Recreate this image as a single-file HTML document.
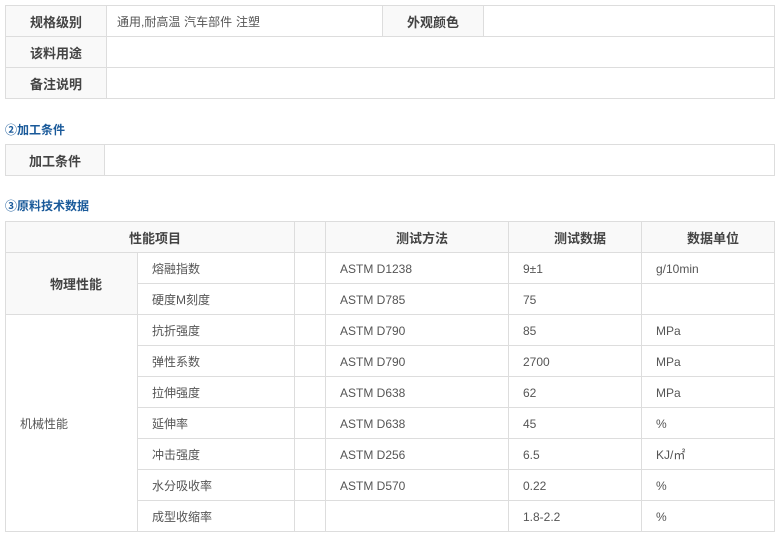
<!DOCTYPE html>
<html lang="zh">
<head>
<meta charset="utf-8">
<title>原料技术数据</title>
<style>
html,body{margin:0;padding:0;background:#fff}
body{position:relative;width:779px;height:539px;overflow:hidden;font-family:"Liberation Sans","WenQuanYi Zen Hei","Noto Sans CJK SC",sans-serif;font-size:12px;color:#555}
div{position:absolute}
.bg{background:#f9f9f9}
.h{height:1px;background:#ddd}
.v{width:1px;background:#ddd}
.t{height:20px;line-height:20px;white-space:nowrap}
.b{font-size:13px;font-weight:bold;color:#444;margin-top:1px}
.s{font-weight:bold;color:#1a5a9a}
</style>
</head>
<body>
<!-- shaded cells -->
<div class="bg" style="left:5px;top:5px;width:101px;height:93px"></div>
<div class="bg" style="left:382px;top:5px;width:101px;height:31px"></div>
<div class="bg" style="left:5px;top:144px;width:99px;height:31px"></div>
<div class="bg" style="left:5px;top:221px;width:769px;height:31px"></div>
<div class="bg" style="left:5px;top:252px;width:132px;height:62px"></div>

<!-- table 1 lines -->
<div class="h" style="left:5px;top:5px;width:770px"></div>
<div class="h" style="left:5px;top:36px;width:770px"></div>
<div class="h" style="left:5px;top:67px;width:770px"></div>
<div class="h" style="left:5px;top:98px;width:770px"></div>
<div class="v" style="left:5px;top:5px;height:94px"></div>
<div class="v" style="left:106px;top:5px;height:94px"></div>
<div class="v" style="left:382px;top:5px;height:31px"></div>
<div class="v" style="left:483px;top:5px;height:31px"></div>
<div class="v" style="left:774px;top:5px;height:94px"></div>

<!-- table 2 lines -->
<div class="h" style="left:5px;top:144px;width:770px"></div>
<div class="h" style="left:5px;top:175px;width:770px"></div>
<div class="v" style="left:5px;top:144px;height:32px"></div>
<div class="v" style="left:104px;top:144px;height:32px"></div>
<div class="v" style="left:774px;top:144px;height:32px"></div>

<!-- table 3 lines -->
<div class="h" style="left:5px;top:221px;width:770px"></div>
<div class="h" style="left:5px;top:252px;width:770px"></div>
<div class="h" style="left:137px;top:283px;width:638px"></div>
<div class="h" style="left:5px;top:314px;width:770px"></div>
<div class="h" style="left:137px;top:345px;width:638px"></div>
<div class="h" style="left:137px;top:376px;width:638px"></div>
<div class="h" style="left:137px;top:407px;width:638px"></div>
<div class="h" style="left:137px;top:438px;width:638px"></div>
<div class="h" style="left:137px;top:469px;width:638px"></div>
<div class="h" style="left:137px;top:500px;width:638px"></div>
<div class="h" style="left:5px;top:531px;width:770px"></div>
<div class="v" style="left:5px;top:221px;height:311px"></div>
<div class="v" style="left:137px;top:252px;height:280px"></div>
<div class="v" style="left:294px;top:221px;height:311px"></div>
<div class="v" style="left:325px;top:221px;height:311px"></div>
<div class="v" style="left:508px;top:221px;height:311px"></div>
<div class="v" style="left:641px;top:221px;height:311px"></div>
<div class="v" style="left:774px;top:221px;height:311px"></div>

<!-- table 1 text -->
<div class="t b" style="left:30px;top:12px">规格级别</div>
<div class="t" style="left:117px;top:12px;word-spacing:.5px">通用,耐高温 汽车部件 注塑</div>
<div class="t b" style="left:407px;top:12px">外观颜色</div>
<div class="t b" style="left:30px;top:43px">该料用途</div>
<div class="t b" style="left:30px;top:74px">备注说明</div>

<!-- section 2 -->
<div class="t s" style="left:5px;top:120px">②加工条件</div>
<div class="t b" style="left:29px;top:151px">加工条件</div>

<!-- section 3 -->
<div class="t s" style="left:5px;top:196px">③原料技术数据</div>
<div class="t b" style="left:129px;top:228px">性能项目</div>
<div class="t b" style="left:396px;top:228px">测试方法</div>
<div class="t b" style="left:554px;top:228px">测试数据</div>
<div class="t b" style="left:687px;top:228px">数据单位</div>
<div class="t b" style="left:50px;top:274px">物理性能</div>
<div class="t" style="left:20px;top:414px">机械性能</div>

<div class="t" style="left:152px;top:259px">熔融指数</div>
<div class="t" style="left:340px;top:259px">ASTM D1238</div>
<div class="t" style="left:523px;top:259px">9±1</div>
<div class="t" style="left:656px;top:259px">g/10min</div>

<div class="t" style="left:152px;top:290px">硬度M刻度</div>
<div class="t" style="left:340px;top:290px">ASTM D785</div>
<div class="t" style="left:523px;top:290px">75</div>

<div class="t" style="left:152px;top:321px">抗折强度</div>
<div class="t" style="left:340px;top:321px">ASTM D790</div>
<div class="t" style="left:523px;top:321px">85</div>
<div class="t" style="left:656px;top:321px">MPa</div>

<div class="t" style="left:152px;top:352px">弹性系数</div>
<div class="t" style="left:340px;top:352px">ASTM D790</div>
<div class="t" style="left:523px;top:352px">2700</div>
<div class="t" style="left:656px;top:352px">MPa</div>

<div class="t" style="left:152px;top:383px">拉伸强度</div>
<div class="t" style="left:340px;top:383px">ASTM D638</div>
<div class="t" style="left:523px;top:383px">62</div>
<div class="t" style="left:656px;top:383px">MPa</div>

<div class="t" style="left:152px;top:414px">延伸率</div>
<div class="t" style="left:340px;top:414px">ASTM D638</div>
<div class="t" style="left:523px;top:414px">45</div>
<div class="t" style="left:656px;top:414px">%</div>

<div class="t" style="left:152px;top:445px">冲击强度</div>
<div class="t" style="left:340px;top:445px">ASTM D256</div>
<div class="t" style="left:523px;top:445px">6.5</div>
<div class="t" style="left:656px;top:445px">KJ/㎡</div>

<div class="t" style="left:152px;top:476px">水分吸收率</div>
<div class="t" style="left:340px;top:476px">ASTM D570</div>
<div class="t" style="left:523px;top:476px">0.22</div>
<div class="t" style="left:656px;top:476px">%</div>

<div class="t" style="left:152px;top:507px">成型收缩率</div>
<div class="t" style="left:523px;top:507px">1.8-2.2</div>
<div class="t" style="left:656px;top:507px">%</div>
</body>
</html>
